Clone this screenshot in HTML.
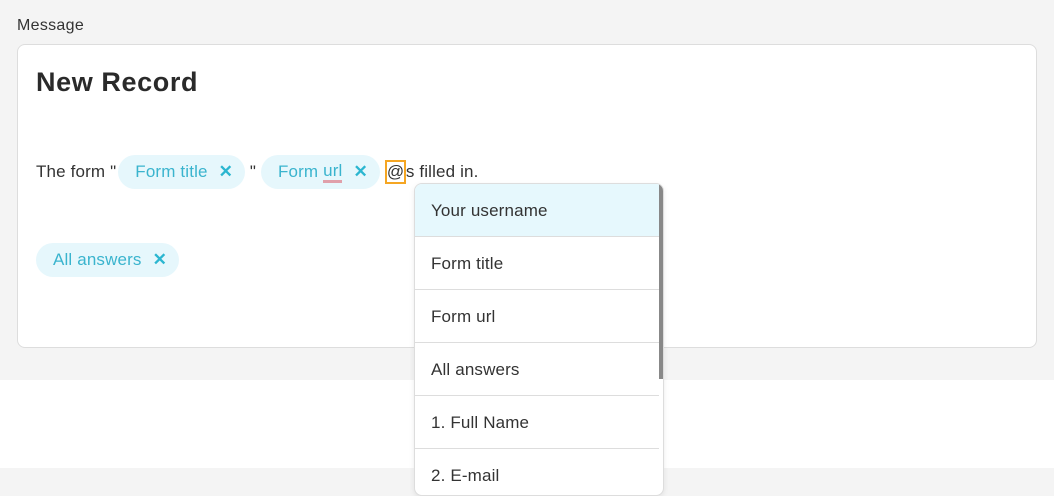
<!DOCTYPE html>
<html><head><style>
body{margin:0;width:1054px;height:495px;background:#f4f4f4;font-family:"Liberation Sans",sans-serif;color:#333;position:relative;overflow:hidden}
.white{position:absolute;left:0;top:380px;width:1054px;height:88px;background:#fff}
.lbl{position:absolute;left:17px;top:17px;font-size:16px;color:#333;letter-spacing:.3px}
.card{position:absolute;left:17px;top:44px;width:1018px;height:302px;background:#fff;border:1px solid #ddd;border-radius:8px}
h1{position:absolute;left:18px;top:22px;margin:0;font-size:27px;font-weight:bold;color:#2a2a2a;letter-spacing:.6px}
.line{position:absolute;left:18px;top:111px;font-size:17px;white-space:nowrap;display:flex;align-items:center;height:32px;letter-spacing:.15px}
.chip{display:inline-flex;align-items:center;background:#e6f7fc;color:#3ab4ce;border-radius:17px;height:34px;padding:0 12px 0 17px;font-size:17px}
.chip b{margin-left:11px;color:#2bb6d0;font-size:17px}
.at{display:inline-block;border:2px solid #f5a623;width:21px;height:24px;line-height:20px;text-align:center;box-sizing:border-box;margin-left:5px}
.dd{position:absolute;left:414px;top:183px;width:248px;height:311px;background:#fff;border:1px solid #ddd;border-radius:8px;overflow:hidden;box-shadow:0 2px 6px rgba(0,0,0,.08)}
.it{height:52px;border-bottom:1px solid #ddd;padding-left:16px;line-height:54px;font-size:17px;color:#333;width:228px;letter-spacing:.15px}
.sb{position:absolute;right:0;top:0;width:4px;height:195px;background:#888}
</style></head><body>
<div class="white"></div>
<div class="lbl">Message</div>
<div class="card">
<h1>New Record</h1>
<div class="line">The form "<span class="chip" style="margin-left:2px">Form title<b>✕</b></span>&nbsp;"&nbsp;<span class="chip">Form&nbsp;<span style="border-bottom:3px solid #e0a0aa;line-height:18px">url</span><b>✕</b></span><span class="at">@</span>s filled in.</div>
<div class="line" style="top:199px;left:18px"><span class="chip">All answers<b>✕</b></span></div>
</div>
<div class="dd">
<div class="it" style="background:#e6f8fd">Your username</div>
<div class="it">Form title</div>
<div class="it">Form url</div>
<div class="it">All answers</div>
<div class="it">1. Full Name</div>
<div class="it">2. E-mail</div>
<div class="sb"></div>
</div>
</body></html>
